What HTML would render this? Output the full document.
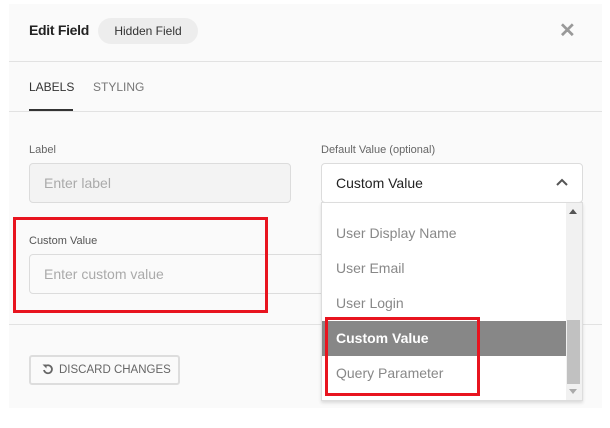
<!DOCTYPE html>
<html><head><style>
*{box-sizing:border-box;margin:0;padding:0}
body{width:610px;height:428px;background:#fff;font-family:"Liberation Sans",Arial,sans-serif;position:relative;overflow:hidden}
.a{position:absolute}
.panel{left:9px;top:4px;width:593px;height:404px;background:#fafafa}
.line{height:1px;background:#e2e2e2}
.input{border:1px solid #dcdcdc;border-radius:4px}
</style></head><body>
<div class="a panel"></div>
<div class="a" style="left:29px;top:22px;font-size:14px;font-weight:bold;color:#222;letter-spacing:-0.3px">Edit Field</div>
<div class="a" style="left:98px;top:18px;width:100px;height:26px;border-radius:13px;background:#ededed;font-size:12px;color:#333;text-align:center;line-height:26px">Hidden Field</div>
<div class="a" style="left:559px;top:18px;font-size:20px;color:#999;font-weight:bold">✕</div>
<div class="a line" style="left:9px;top:61px;width:593px"></div>
<div class="a" style="left:29px;top:80px;font-size:12px;color:#333">LABELS</div>
<div class="a" style="left:93px;top:80px;font-size:12px;color:#777">STYLING</div>
<div class="a" style="left:29px;top:109px;width:44px;height:2px;background:#333"></div>
<div class="a line" style="left:9px;top:111px;width:593px"></div>
<div class="a" style="left:29px;top:144px;font-size:11px;color:#666">Label</div>
<div class="a input" style="left:29px;top:163px;width:262px;height:40px;background:#f3f3f3"></div>
<div class="a" style="left:44px;top:175px;font-size:14px;color:#aaa">Enter label</div>
<div class="a" style="left:321px;top:144px;font-size:11px;color:#666">Default Value (optional)</div>
<div class="a input" style="left:321px;top:163px;width:262px;height:40px;background:#fff"></div>
<div class="a" style="left:336px;top:175px;font-size:14px;color:#222">Custom Value</div>
<svg class="a" style="left:556px;top:178px" width="12" height="8"><path d="M1 7L6 2L11 7" stroke="#555" stroke-width="2" fill="none"/></svg>
<div class="a" style="left:29px;top:235px;font-size:11px;color:#555">Custom Value</div>
<div class="a input" style="left:29px;top:254px;width:310px;height:40px;background:#fafafa"></div>
<div class="a" style="left:44px;top:266px;font-size:14px;color:#aaa">Enter custom value</div>
<div class="a" style="left:13px;top:217px;width:255px;height:96px;border:3px solid #e8141f"></div>
<div class="a line" style="left:9px;top:324px;width:593px"></div>
<div class="a" style="left:29px;top:355px;width:151px;height:30px;border:2px solid #ddd;border-radius:3px;font-size:11.5px;color:#666;line-height:26px;padding-left:28px">DISCARD CHANGES</div>
<svg class="a" style="left:42px;top:363px" width="12" height="12" viewBox="0 0 12 12"><path d="M3 3.5A4 4 0 1 1 2 7" stroke="#666" stroke-width="1.8" fill="none"/><path d="M0.5 1.5L4.5 1.5L4.5 5.5Z" fill="#666"/></svg>
<div class="a" style="left:321px;top:202px;width:262px;height:199px;background:#fff;border:1px solid #ddd;box-shadow:0 2px 3px rgba(0,0,0,.12)"></div>
<div class="a" style="left:336px;top:225px;font-size:14px;color:#888">User Display Name</div>
<div class="a" style="left:336px;top:260px;font-size:14px;color:#888">User Email</div>
<div class="a" style="left:336px;top:295px;font-size:14px;color:#888">User Login</div>
<div class="a" style="left:322px;top:321px;width:244px;height:35px;background:#878787"></div>
<div class="a" style="left:336px;top:330px;font-size:14px;color:#fff;font-weight:bold">Custom Value</div>
<div class="a" style="left:336px;top:365px;font-size:14px;color:#888">Query Parameter</div>
<div class="a" style="left:566px;top:203px;width:16px;height:197px;background:#f1f1f1"></div>
<div class="a" style="left:567px;top:320px;width:13px;height:64px;background:#c1c1c1"></div>
<svg class="a" style="left:569px;top:209px" width="8" height="5"><path d="M0 5L4 0L8 5Z" fill="#555"/></svg>
<svg class="a" style="left:569px;top:389px" width="8" height="5"><path d="M0 0L4 5L8 0Z" fill="#aaa"/></svg>
<div class="a" style="left:325px;top:317px;width:155px;height:79px;border:3px solid #e8141f"></div>
</body></html>
